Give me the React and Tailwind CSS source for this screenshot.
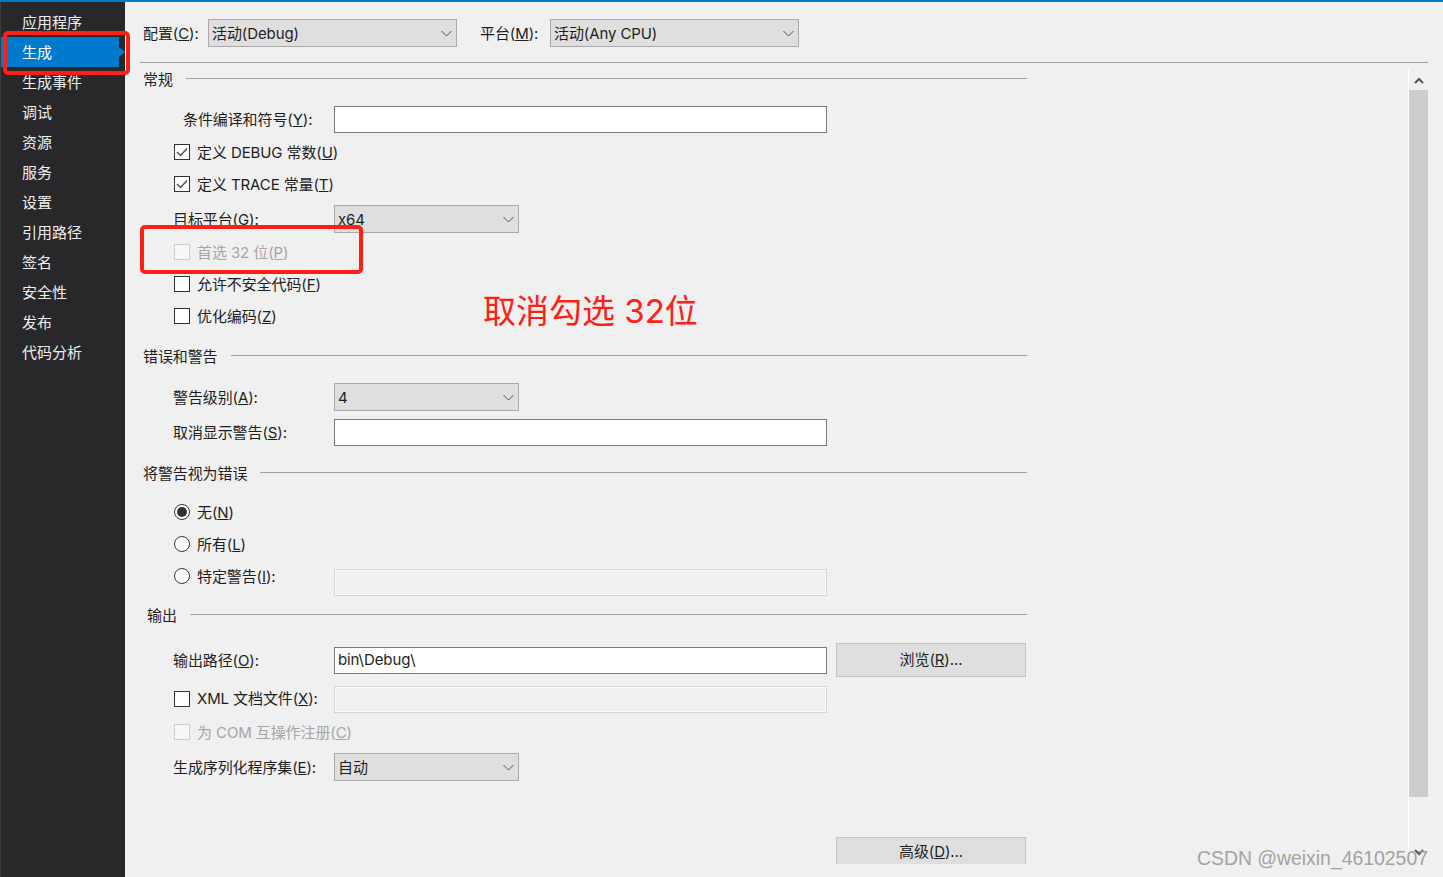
import React from 'react';

const NAV = ['应用程序', '生成', '生成事件', '调试', '资源', '服务', '设置', '引用路径', '签名', '安全性', '发布', '代码分析'];

/* ── Small form bits ──────────────────────────────────────────── */
function Chevron() {
  return (
    <svg width="11" height="7" viewBox="0 0 11 7" fill="none" stroke="#555" strokeWidth="1">
      <path d="M0.5 1 L5.5 6 L10.5 1" />
    </svg>
  );
}

function Select({ value, className }) {
  return (
    <div className={`h-[28px] flex items-center justify-between pl-[3px] pr-[4px] bg-[#dfdfdf] border border-[#a9a9a9] text-[#1e1e1e] ${className}`}>
      <span className="translate-y-px">{value}</span>
      <Chevron />
    </div>
  );
}

function Input({ value = '' }) {
  return (
    <div className="w-[493px] h-[27px] flex items-center pl-[3px] bg-white border border-[#7a7a7a] text-[#1e1e1e]">{value}</div>
  );
}

function DisabledInput() {
  return <div className="w-[493px] h-[27px] border border-[#d4d4d4] bg-[#f0f0f0] shadow-[inset_0_0_0_1px_#fafafa]" />;
}

function Check({ checked, disabled, children, textClass = 'translate-y-px' }) {
  return (
    <div className={`flex items-center gap-[7px] ${disabled ? 'text-[#a6a6a6]' : 'text-[#1e1e1e]'}`}>
      <span className={`w-[16px] h-[16px] ml-px flex items-center justify-center border ${disabled ? 'border-[#cccccc] bg-[#f7f7f7]' : 'border-[#333333] bg-white'}`}>
        {checked && (
          <svg width="12" height="10" viewBox="0 0 12 10" fill="none" stroke="#4a4a4a" strokeWidth="1.4">
            <path d="M1 5 L4.5 8.5 L11 1.5" />
          </svg>
        )}
      </span>
      <span className={textClass}>{children}</span>
    </div>
  );
}

function Radio({ checked, children }) {
  return (
    <div className="flex items-center gap-[7px] text-[#1e1e1e]">
      <span className="w-[16px] h-[16px] ml-px rounded-full border border-[#333333] bg-white flex items-center justify-center">
        {checked && <span className="w-[10px] h-[10px] rounded-full bg-[#333333]" />}
      </span>
      <span className="translate-y-px">{children}</span>
    </div>
  );
}

function Section({ title, className, labelClass = 'ml-[18px]' }) {
  return (
    <div className={`h-[20px] flex items-center gap-[13px] text-[#1e1e1e] ${className}`}>
      <span className={`shrink-0 translate-y-px ${labelClass}`}>{title}</span>
      <span className="flex-1 h-px bg-[#a0a0a0] -translate-y-px" />
    </div>
  );
}

function Button({ children, className }) {
  return (
    <div className={`w-[190px] flex items-center justify-center bg-[#dfdfdf] border border-[#c4c4c4] text-[#1e1e1e] ${className}`}>{children}</div>
  );
}

/* ── App ──────────────────────────────────────────────────────── */
export default function App() {
  return (
    <div className="relative w-[1443px] h-[877px] overflow-hidden bg-[#f0f0f0] text-[15px] leading-[20px] tracking-[-0.1px] font-['Inter','Noto_Sans_CJK_SC',sans-serif]">
      <div className="h-[2px] bg-[#007acc]" />
      <div className="flex h-[875px]">
        {/* Sidebar */}
        <div className="w-[125px] shrink-0 pt-[5px] bg-[#28282a] border-l border-[#3c3c3e] text-[#efefef] tracking-normal">
          {NAV.map((item) => (
            <div key={item} className={`relative h-[30px] flex items-center pl-[21px] mr-[6px] ${item === '生成' ? 'bg-[#007acc] text-white' : ''}`}>
              <span className="translate-y-px">{item}</span>
              {item === '生成' && (
                <svg className="absolute left-full top-[10px]" width="6" height="10" viewBox="0 0 6 10">
                  <path d="M0 0 L6 5 L0 10 Z" fill="#007acc" />
                </svg>
              )}
            </div>
          ))}
        </div>

        {/* Main */}
        <div className="flex-1 min-w-0 flex flex-col">
          <div className="h-[61px] shrink-0 ml-[15px] mr-[15px] border-b border-[#a0a0a0] flex items-start pt-[17px] text-[#1e1e1e]">
            <div className="flex items-center h-[28px]">
              <span className="ml-[3px] w-[65px] translate-y-px">配置(<u>C</u>):</span>
              <Select value="活动(Debug)" className="w-[249px]" />
              <span className="ml-[23px] w-[70px] translate-y-px">平台(<u>M</u>):</span>
              <Select value="活动(Any CPU)" className="w-[249px]" />
            </div>
          </div>

          <div className="flex-1 flex min-h-0">
            <div className="w-[902px] shrink-0">
              <Section title="常规" className="mt-[6px]" />

              <div className="mt-[17px] flex items-center h-[27px]">
                <span className="w-[209px] pl-[58px] text-[#1e1e1e]">条件编译和符号(<u>Y</u>):</span>
                <Input />
              </div>
              <div className="mt-[9px] ml-[48px] h-[20px]"><Check checked>定义 DEBUG 常数(<u>U</u>)</Check></div>
              <div className="mt-[12px] ml-[48px] h-[20px]"><Check checked>定义 TRACE 常量(<u>T</u>)</Check></div>
              <div className="mt-[11px] flex items-center h-[28px]">
                <span className="w-[209px] pl-[48px] text-[#1e1e1e] translate-y-px">目标平台(<u>G</u>):</span>
                <Select value="x64" className="w-[185px]" />
              </div>
              <div className="mt-[9px] ml-[48px] h-[20px]"><Check disabled>首选 32 位(<u>P</u>)</Check></div>
              <div className="mt-[12px] ml-[48px] h-[20px]"><Check>允许不安全代码(<u>F</u>)</Check></div>
              <div className="mt-[12px] ml-[48px] h-[20px]"><Check>优化编码(<u>Z</u>)</Check></div>

              <Section title="错误和警告" className="mt-[20px]" />
              <div className="mt-[17px] flex items-center h-[28px]">
                <span className="w-[209px] pl-[48px] text-[#1e1e1e] translate-y-px">警告级别(<u>A</u>):</span>
                <Select value="4" className="w-[185px]" />
              </div>
              <div className="mt-[8px] flex items-center h-[27px]">
                <span className="w-[209px] pl-[48px] text-[#1e1e1e]">取消显示警告(<u>S</u>):</span>
                <Input />
              </div>

              <Section title="将警告视为错误" className="mt-[17px]" />
              <div className="mt-[19px] ml-[48px] h-[20px]"><Radio checked>无(<u>N</u>)</Radio></div>
              <div className="mt-[12px] ml-[48px] h-[20px]"><Radio>所有(<u>L</u>)</Radio></div>
              <div className="mt-[12px] flex items-start h-[30px]">
                <div className="w-[209px] pl-[48px]"><Radio>特定警告(<u>I</u>):</Radio></div>
                <div className="mt-[3px]"><DisabledInput /></div>
              </div>

              <Section title="输出" className="mt-[9px]" labelClass="ml-[22px]" />
              <div className="mt-[18px] flex items-center h-[34px]">
                <span className="w-[209px] pl-[48px] text-[#1e1e1e] translate-y-px">输出路径(<u>O</u>):</span>
                <Input value="bin\Debug\" />
                <Button className="ml-[9px] h-[34px]">浏览(<u>R</u>)...</Button>
              </div>
              <div className="mt-[9px] flex items-center h-[27px]">
                <div className="w-[209px] pl-[48px] -translate-y-px"><Check textClass="">XML 文档文件(<u>X</u>):</Check></div>
                <DisabledInput />
              </div>
              <div className="mt-[9px] ml-[48px] h-[20px]"><Check disabled>为 COM 互操作注册(<u>C</u>)</Check></div>
              <div className="mt-[11px] flex items-center h-[28px]">
                <span className="w-[209px] pl-[48px] text-[#1e1e1e] translate-y-px">生成序列化程序集(<u>E</u>):</span>
                <Select value="自动" className="w-[185px]" />
              </div>
              <div className="mt-[56px] flex justify-end pr-[1px]">
                <Button className="h-[27px] border-b-0 pt-[2px]">高级(<u>D</u>)...</Button>
              </div>
            </div>

            {/* Scrollbar */}
            <div className="ml-auto mr-[15px] mt-[6px] mb-[19px] w-[20px] border-l border-white flex flex-col items-center">
              <svg className="h-[21px] shrink-0" width="10" height="21" viewBox="0 0 10 21" fill="none" stroke="#555" strokeWidth="2">
                <path d="M1 14 L5 10 L9 14" />
              </svg>
              <div className="w-full h-[707px] bg-[#cdcdcd]" />
              <svg className="mt-auto" width="10" height="10" viewBox="0 0 10 10" fill="none" stroke="#555" strokeWidth="2">
                <path d="M1 2 L5 6 L9 2" />
              </svg>
            </div>
          </div>
        </div>
      </div>

      {/* Annotations painted over the screenshot */}
      <div className="absolute left-[3px] top-[31px] w-[127px] h-[44px] border-[4px] border-[#ff2015] rounded-[5px]" />
      <div className="absolute left-[140px] top-[225px] w-[223px] h-[49px] border-[4px] border-[#ff2015] rounded-[5px]" />
      <div className="absolute left-[483px] top-[288px] text-[33px] leading-[46px] tracking-normal text-[#ff2015] whitespace-nowrap">取消勾选 32位</div>
      <div className="absolute left-[1197px] top-[846px] text-[19.4px] leading-[24px] tracking-normal text-[#a3a3a3] whitespace-nowrap font-['Liberation_Sans',sans-serif]">CSDN @weixin_46102507</div>
    </div>
  );
}
